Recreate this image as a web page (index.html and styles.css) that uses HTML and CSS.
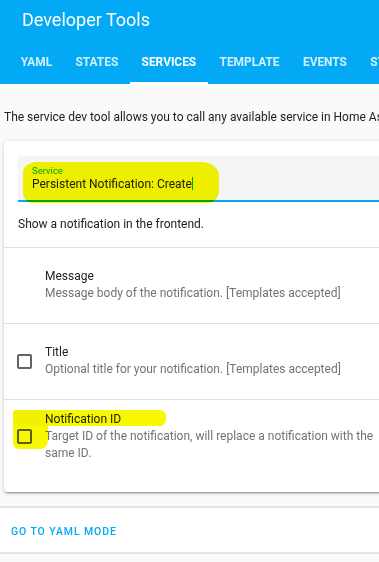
FILE: index.html
```html
<!DOCTYPE html>
<html>
<head>
<meta charset="utf-8">
<link rel="stylesheet" href="styles.css">
</head>
<body>
<div class="page">
  <header class="header">
    <div class="toolbar"><span class="title">Developer Tools</span></div>
    <nav class="tabs">
      <span class="tab">YAML</span>
      <span class="tab">STATES</span>
      <span class="tab active">SERVICES</span>
      <span class="tab">TEMPLATE</span>
      <span class="tab">EVENTS</span>
      <span class="tab">STATISTICS</span>
    </nav>
  </header>
  <main class="content">
    <p class="intro">The service dev tool allows you to call any available service in Home Assistant.</p>
    <section class="card">
      <div class="card-top">
        <div class="field">
          <div class="field-label">Service</div>
          <div class="field-value">Persistent Notification: Create<span class="caret"></span></div>
          <span class="mark mark-service"></span>
        </div>
        <p class="service-desc">Show a notification in the frontend.</p>
      </div>
      <div class="row row-msg">
        <div class="row-check"></div>
        <div class="row-text">
          <div class="row-title">Message</div>
          <div class="row-desc">Message body of the notification. [Templates accepted]</div>
        </div>
      </div>
      <div class="row row-title-field">
        <div class="row-check"><span class="checkbox"></span></div>
        <div class="row-text">
          <div class="row-title">Title</div>
          <div class="row-desc">Optional title for your notification. [Templates accepted]</div>
        </div>
      </div>
      <div class="row row-id">
        <div class="row-check"><span class="checkbox"></span></div>
        <div class="row-text">
          <div class="row-title">Notification ID</div>
          <div class="row-desc">Target ID of the notification, will replace a notification with the same ID.</div>
        </div>
        <span class="mark mark-id-band"></span>
        <span class="mark mark-id-side"></span>
      </div>
    </section>
    <div class="footer">
      <span class="yaml-btn">GO TO YAML MODE</span>
    </div>
  </main>
</div>
</body>
</html>
```
FILE: styles.css
```css
html, body {
  margin: 0;
  padding: 0;
  overflow: hidden;
  background: #fafafa;
}
body {
  font-family: Roboto, "Liberation Sans", Arial, sans-serif;
  color: #212121;
}
.page {
  width: 520px;
}
.header {
  background: #03a9f4;
  color: #fff;
  height: 84px;
  display: flex;
  flex-direction: column;
}
.toolbar {
  height: 38px;
  display: flex;
  align-items: center;
  padding-left: 22px;
}
.title {
  font-size: 18px;
  line-height: 22px;
  padding-top: 1px;
}
.tabs {
  flex: 1;
  display: flex;
  padding-left: 9px;
}
.tab {
  padding: 4px 11.7px 0;
  display: flex;
  align-items: center;
  font-size: 11.9px;
  font-weight: 700;
  color: rgba(255, 255, 255, 0.82);
  border-bottom: 2px solid transparent;
  white-space: nowrap;
}
.tab.active {
  color: #fff;
  border-bottom-color: #fff;
}
.content {
  padding: 0;
}
.intro {
  margin: 25px 0 0 4px;
  font-size: 12px;
  line-height: 16px;
  white-space: nowrap;
}
.card {
  margin: 16px 0 0 4px;
  background: #fff;
  border-radius: 4px;
  box-shadow: 0 2px 2px 0 rgba(0,0,0,.14), 0 1px 5px 0 rgba(0,0,0,.12), 0 3px 1px -2px rgba(0,0,0,.2);
}
.card-top {
  padding: 15px 0 15px 14px;
}
.field {
  position: relative;
  background: #f5f5f5;
  border-bottom: 2px solid #03a9f4;
  border-radius: 4px 4px 0 0;
  padding: 9px 0 8px 14px;
}
.field-label {
  font-size: 9.5px;
  line-height: 11px;
  color: #03a9f4;
}
.field-value {
  font-size: 12px;
  line-height: 16px;
  color: #212121;
}
.caret {
  display: inline-block;
  width: 1px;
  height: 13px;
  background: #03a9f4;
  vertical-align: -2px;
}
.service-desc {
  margin: 14px 0 0 0;
  font-size: 12px;
  line-height: 16px;
}
.row {
  position: relative;
  display: flex;
  align-items: center;
  border-top: 1px solid #e0e0e0;
}
.row-msg, .row-title-field {
  padding: 20px 0 21px 0;
}
.row-id {
  padding: 11px 0 30px 0;
}
.row-check {
  width: 41px;
  flex: none;
  display: flex;
  justify-content: flex-start;
  padding-left: 13px;
  box-sizing: border-box;
}
.checkbox {
  width: 15px;
  height: 15px;
  box-sizing: border-box;
  border: 2px solid #636363;
  border-radius: 2px;
}
.row-text {
  max-width: 335px;
  font-size: 12px;
  line-height: 17px;
}
.row-title {
  color: #212121;
}
.row-desc {
  color: #737373;
}
.footer {
  margin-top: 14px;
  background: #fff;
  border-top: 2px solid #e4e4e4;
  border-bottom: 2px solid #e4e4e4;
  height: 44px;
  display: flex;
  align-items: center;
  padding-left: 11px;
}
.yaml-btn {
  font-size: 10.5px;
  font-weight: 500;
  letter-spacing: 0.9px;
  color: #03a9f4;
  padding-top: 2px;
}
.mark {
  position: absolute;
  background: #f8f800;
  mix-blend-mode: multiply;
}
.mark-service {
  left: 5px;
  top: 6px;
  width: 196px;
  height: 41px;
  border-radius: 14px 18px 12px 10px / 10px 14px 12px 10px;
}
.mark-id-band {
  left: 9px;
  top: 10px;
  width: 153px;
  height: 16px;
  border-radius: 3px 6px 6px 3px;
}
.mark-id-side {
  left: 9px;
  top: 10px;
  width: 35px;
  height: 39px;
  border-radius: 3px 3px 8px 6px;
}
```
